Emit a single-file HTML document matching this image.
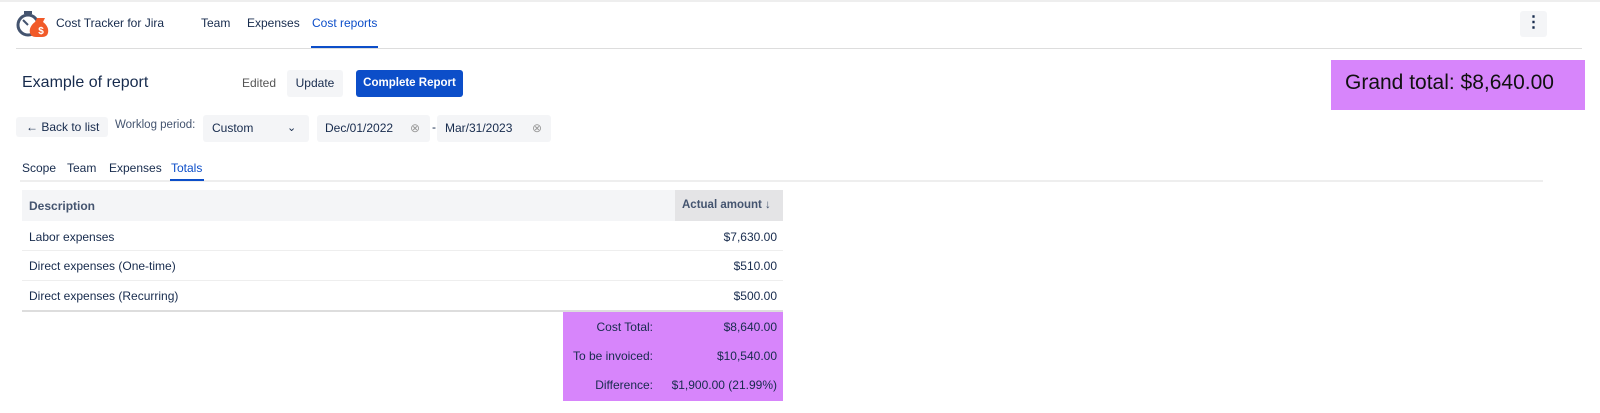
<!DOCTYPE html><html><head><style>
*{box-sizing:border-box;margin:0;padding:0}
body{width:1600px;height:413px;background:#fff;font-family:"Liberation Sans",sans-serif;color:#172b4d;position:relative;overflow:hidden;font-size:12px}
.a{position:absolute;white-space:nowrap}
.g{background:#f4f5f7;border-radius:3px}
.p{background:#d785fb}
</style></head><body>
<div class="a" style="left:0;top:0;width:1600px;height:2px;background:#eee"></div>
<svg class="a" style="left:15px;top:8px" width="36" height="32" viewBox="0 0 36 32">
<circle cx="13" cy="17" r="10" fill="none" stroke="#44546f" stroke-width="3"/>
<rect x="9" y="3" width="8" height="3" fill="#44546f"/><line x1="13" y1="17" x2="8" y2="12" stroke="#44546f" stroke-width="2"/>
<path d="M22 10h8l-2 4c4 3 6 7 5 11q-1 4-6 4h-6q-5 0-6-4c-1-4 1-8 5-11z" fill="#f15a29"/>
<text x="26" y="26" font-size="10" fill="#fff" font-weight="bold" text-anchor="middle" font-family="Liberation Sans">$</text></svg>
<div class="a" style="left:56px;top:16px">Cost Tracker for Jira</div>
<div class="a" style="left:201px;top:16px">Team</div>
<div class="a" style="left:247px;top:16px">Expenses</div>
<div class="a" style="left:312px;top:16px;color:#0c4ec9">Cost reports</div>
<div class="a" style="left:311px;top:46px;width:67px;height:3px;background:#0c4ec9"></div>
<div class="a" style="left:16px;top:48px;width:1566px;height:1px;background:#ddd"></div>
<div class="a g" style="left:1520px;top:11px;width:27px;height:26px;text-align:center;font-weight:bold;font-size:16px;line-height:24px">⋮</div>
<div class="a" style="left:22px;top:74px;font-size:16px">Example of report</div>
<div class="a" style="left:242px;top:76px;color:#555">Edited</div>
<div class="a g" style="left:287px;top:70px;width:56px;height:27px;line-height:27px;text-align:center">Update</div>
<div class="a" style="left:356px;top:70px;width:107px;height:27px;line-height:27px;text-align:center;background:#0c4ec9;color:#fff;font-weight:bold;border-radius:3px;font-size:11.5px">Complete Report</div>
<div class="a p" style="left:1331px;top:60px;width:254px;height:50px;line-height:46px;font-size:21px;padding-left:14px;color:#111">Grand total: $8,640.00</div>
<div class="a g" style="left:16px;top:117px;width:92px;height:20px;line-height:20px;padding-left:10px">← Back to list</div>
<div class="a" style="left:115px;top:119px;color:#44546f;font-size:11.5px">Worklog period:</div>
<div class="a g" style="left:203px;top:115px;width:106px;height:27px;line-height:27px;padding-left:9px">Custom<span style="position:absolute;left:84px;font-size:11px">⌄</span></div>
<div class="a g" style="left:317px;top:115px;width:113px;height:27px;line-height:27px;padding-left:8px">Dec/01/2022<span style="position:absolute;left:93px;color:#999">⊗</span></div>
<div class="a" style="left:432px;top:120px">-</div>
<div class="a g" style="left:437px;top:115px;width:114px;height:27px;line-height:27px;padding-left:8px">Mar/31/2023<span style="position:absolute;left:95px;color:#999">⊗</span></div>
<div class="a" style="left:22px;top:161px">Scope</div>
<div class="a" style="left:67px;top:161px">Team</div>
<div class="a" style="left:109px;top:161px">Expenses</div>
<div class="a" style="left:171px;top:161px;color:#0c4ec9">Totals</div>
<div class="a" style="left:20px;top:180px;width:1523px;height:2px;background:#eee"></div>
<div class="a" style="left:170px;top:179px;width:34px;height:2px;background:#0c4ec9"></div>
<div class="a" style="left:22px;top:190px;width:761px;height:31px;background:#f4f5f7"></div>
<div class="a" style="left:675px;top:190px;width:108px;height:31px;background:#e4e4e6"></div>
<div class="a" style="left:29px;top:199px;font-weight:bold;color:#44546f">Description</div>
<div class="a" style="left:682px;top:199px;font-weight:bold;color:#44546f;font-size:11.5px">Actual amount ↓</div>
<div class="a" style="left:29px;top:230px">Labor expenses</div><div class="a" style="right:823px;top:230px">$7,630.00</div>
<div class="a" style="left:22px;top:250px;width:761px;height:1px;background:#eee"></div>
<div class="a" style="left:29px;top:259px">Direct expenses (One-time)</div><div class="a" style="right:823px;top:259px">$510.00</div>
<div class="a" style="left:22px;top:280px;width:761px;height:1px;background:#eee"></div>
<div class="a" style="left:29px;top:289px">Direct expenses (Recurring)</div><div class="a" style="right:823px;top:289px">$500.00</div>
<div class="a" style="left:22px;top:310px;width:761px;height:2px;background:#ddd"></div>
<div class="a p" style="left:563px;top:312px;width:220px;height:89px"></div>
<div class="a" style="right:947px;top:320px;font-size:12px">Cost Total:</div><div class="a" style="right:823px;top:320px;font-size:12px">$8,640.00</div>
<div class="a" style="right:947px;top:349px;font-size:12px">To be invoiced:</div><div class="a" style="right:823px;top:349px;font-size:12px">$10,540.00</div>
<div class="a" style="right:947px;top:378px;font-size:12px">Difference:</div><div class="a" style="right:823px;top:378px;font-size:12px">$1,900.00 (21.99%)</div>
</body></html>
